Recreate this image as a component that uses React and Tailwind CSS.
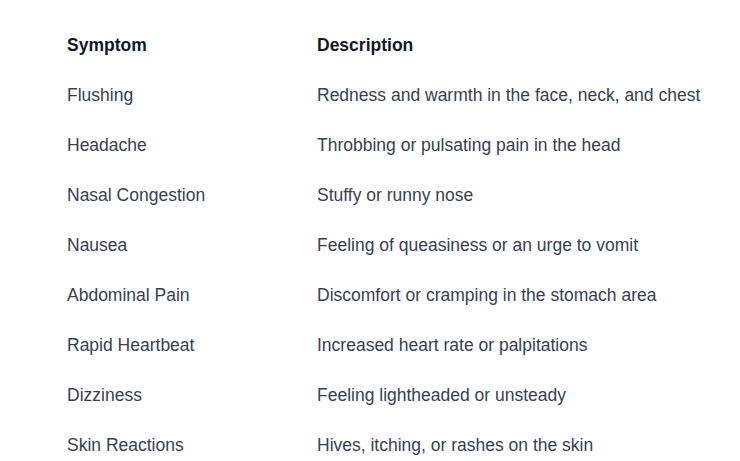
import React from 'react';

const rows = [
  { symptom: 'Flushing', description: 'Redness and warmth in the face, neck, and chest' },
  { symptom: 'Headache', description: 'Throbbing or pulsating pain in the head' },
  { symptom: 'Nasal Congestion', description: 'Stuffy or runny nose' },
  { symptom: 'Nausea', description: 'Feeling of queasiness or an urge to vomit' },
  { symptom: 'Abdominal Pain', description: 'Discomfort or cramping in the stomach area' },
  { symptom: 'Rapid Heartbeat', description: 'Increased heart rate or palpitations' },
  { symptom: 'Dizziness', description: 'Feeling lightheaded or unsteady' },
  { symptom: 'Skin Reactions', description: 'Hives, itching, or rashes on the skin' },
];

export default function App() {
  return (
    <div className="bg-white min-h-screen pl-[51px] pt-5" style={{ fontFamily: '"Liberation Sans", Arial, sans-serif' }}>
      <table className="text-left text-[17.5px] border-collapse">
        <thead>
          <tr className="h-[50px]">
            <th className="w-[250px] px-4 font-bold text-[#111827]">Symptom</th>
            <th className="px-4 font-bold text-[#111827]">Description</th>
          </tr>
        </thead>
        <tbody>
          {rows.map(row => (
            <tr key={row.symptom} className="h-[50px]">
              <td className="px-4 text-[#374151]">{row.symptom}</td>
              <td className="px-4 text-[#374151] whitespace-nowrap">{row.description}</td>
            </tr>
          ))}
        </tbody>
      </table>
    </div>
  );
}
